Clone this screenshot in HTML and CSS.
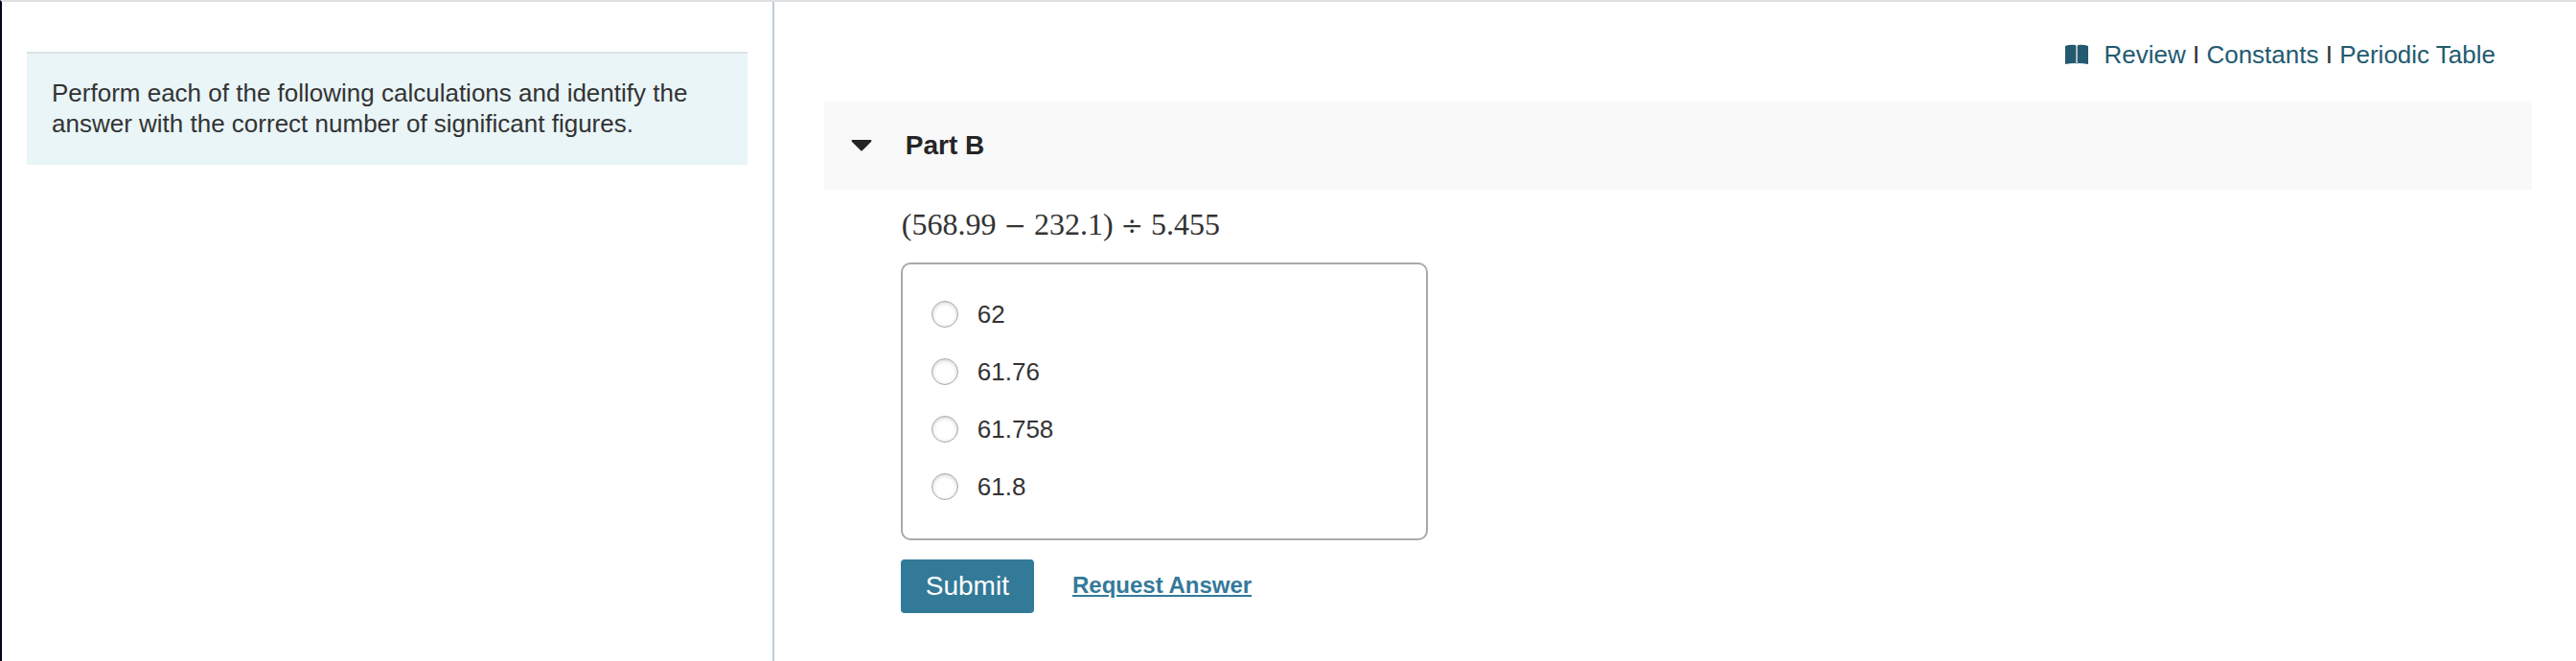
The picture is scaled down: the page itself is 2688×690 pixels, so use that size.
FILE: index.html
```
<!DOCTYPE html>
<html lang="en">

<head>
    <meta charset="utf-8">
    <title>Part B</title>
    <link rel="stylesheet" href="styles.css">
</head>

<body class="container">
    <aside class="sidebar">
        <p class="intro">Perform each of the following calculations and identify the answer with the correct number of significant figures.</p>
    </aside>
    <main class="content">
        <nav class="resources">
            <svg class="book-icon" viewBox="0 0 24 22" aria-hidden="true">
                <path d="M0 2Q5 0 11 1V20Q5 20 0 21ZM13 1Q19 0 24 2V21Q19 20 13 20Z" />
                <path class="book-spine" d="M11 2h2v19h-2z" />
            </svg>
            <div>
                <a href="#">Review</a> I <a href="#">Constants</a> I <a href="#">Periodic Table</a>
            </div>
        </nav>
        <header class="part-header">
            <svg class="arrow" viewBox="0 0 22 12" aria-hidden="true">
                <path d="M1 0H21Q22 1 21 2L12 11Q11 12 10 11L1 2Q0 1 1 0Z" />
            </svg>
            <h2 class="part-title">Part B</h2>
        </header>
        <form class="question">
            <div class="expression">
                <span>(568.99</span>
                <span class="operator">−</span>
                <span>232.1)</span>
                <span class="operator">÷</span>
                <span>5.455</span>
            </div>
            <div class="choices">
                <div class="choice">
                    <input type="radio" name="answer" id="answer-1" value="62">
                    <label for="answer-1">62</label>
                </div>
                <div class="choice">
                    <input type="radio" name="answer" id="answer-2" value="61.76">
                    <label for="answer-2">61.76</label>
                </div>
                <div class="choice">
                    <input type="radio" name="answer" id="answer-3" value="61.758">
                    <label for="answer-3">61.758</label>
                </div>
                <div class="choice">
                    <input type="radio" name="answer" id="answer-4" value="61.8">
                    <label for="answer-4">61.8</label>
                </div>
            </div>
            <div class="actions">
                <button class="button-submit" type="button">Submit</button>
                <a class="request-answer" href="#">Request Answer</a>
            </div>
        </form>
    </main>
</body>

</html>
```
FILE: styles.css
```
* {
    box-sizing: border-box;
}

.container {
    display: flex;
    min-height: 100vh;
    margin: 0;
    border-top: 2px solid #e0e0e0;
    border-left: 2px solid #020617;
    background-color: white;
    color: #333333;
    font-family: "Liberation Sans", Arial, sans-serif;
    font-size: 26px;
    line-height: 32px;
}

.sidebar {
    flex: 0 0 30%;
    padding: 52px 26px;
    border-right: 2px solid #bccddb;
}

.intro {
    margin: 0;
    padding: 25px 26px 27px;
    border-top: 2px solid #dce2e2;
    background-color: #e9f5f7;
}

.content {
    flex: 1;
    padding: 39px 46px 48px 52px;
}

.resources {
    display: flex;
    align-items: center;
    justify-content: flex-end;
    gap: 16px;
    margin-bottom: 33px;
    padding-right: 38px;
}

.resources a {
    color: #235a70;
    text-decoration: none;
}

.book-icon {
    width: 24px;
    height: 22px;
    fill: #235a70;
}

.book-icon .book-spine {
    fill: #a9bdc6;
}

.part-header {
    display: flex;
    align-items: center;
    gap: 35px;
    height: 92px;
    padding: 0 28px;
    background-color: #f9f9f9;
}

.arrow {
    width: 22px;
    height: 12px;
    fill: #252525;
}

.part-title {
    margin: 0;
    color: #252525;
    font-size: 28px;
}

.question {
    padding: 20px 80px 0;
}

.expression {
    display: flex;
    align-items: baseline;
    gap: 8px;
    height: 32px;
    padding-left: 1px;
    font-family: "Liberation Serif", "Times New Roman", serif;
    font-size: 32px;
}

.operator {
    font-family: "DejaVu Serif", serif;
    font-size: 28px;
}

.choices {
    width: 550px;
    max-width: 100%;
    margin: 24px 0 20px;
    padding: 22px 30px 24px;
    border: 2px solid #a9a9a9;
    border-radius: 10px;
}

.choice {
    display: flex;
    align-items: center;
    gap: 20px;
    height: 60px;
}

.choice input {
    appearance: none;
    width: 28px;
    height: 28px;
    margin: 0;
    border: 1px solid #a9a9a9;
    border-radius: 50%;
    background-color: white;
    box-shadow: inset 0 1px 4px #cccccc;
}

.choice input:checked {
    background-color: #337a99;
}

.actions {
    display: flex;
    align-items: center;
    gap: 40px;
}

.button-submit {
    height: 56px;
    padding: 0 26px;
    border: none;
    border-radius: 4px;
    background-color: #337a99;
    color: white;
    font-family: inherit;
    font-size: 28px;
    cursor: pointer;
}

.request-answer {
    padding-bottom: 3px;
    color: #337a99;
    font-size: 24px;
    font-weight: bold;
}
```
